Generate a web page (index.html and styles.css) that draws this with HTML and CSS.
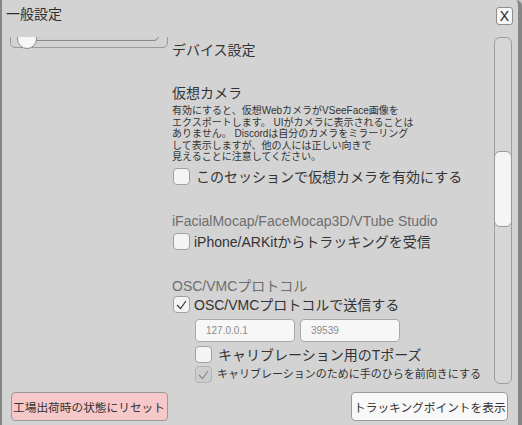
FILE: index.html
```html
<!DOCTYPE html>
<html lang="ja">
<head>
<meta charset="utf-8">
<link rel="stylesheet" href="styles.css">
</head>
<body>
<div class="window">
  <div class="titlebar">
    <span class="title">一般設定</span>
    <button class="close">X</button>
  </div>
  <div class="main">
    <div class="left-pane">
      <div class="slider-box">
        <div class="track">
          <div class="knob"></div>
        </div>
      </div>
    </div>
    <div class="content">
      <div class="h-section">デバイス設定</div>
      <div class="h-camera">仮想カメラ</div>
      <div class="desc">有効にすると、仮想WebカメラがVSeeFace画像を<br>エクスポートします。 UIがカメラに表示されることは<br>ありません。 Discordは自分のカメラをミラーリング<br>して表示しますが、他の人には正しい向きで<br>見えることに注意してください。</div>
      <div class="row row-cam"><span class="cb"></span><span class="label">このセッションで仮想カメラを有効にする</span></div>
      <div class="h-gray h-ifm">iFacialMocap/FaceMocap3D/VTube Studio</div>
      <div class="row row-iphone"><span class="cb"></span><span class="label">iPhone/ARKitからトラッキングを受信</span></div>
      <div class="h-gray h-osc">OSC/VMCプロトコル</div>
      <div class="row row-osc"><span class="cb"><svg viewBox="0 0 17 17" width="17" height="17"><path d="M4 9 L7.5 12.5 L13 5" fill="none" stroke="#3a3a3a" stroke-width="1.2"/></svg></span><span class="label">OSC/VMCプロトコルで送信する</span></div>
      <div class="inputs">
        <div class="field">127.0.0.1</div>
        <div class="field">39539</div>
      </div>
      <div class="row row-tpose"><span class="cb"></span><span class="label">キャリブレーション用のTポーズ</span></div>
      <div class="row row-palm"><span class="cb cb-disabled"><svg viewBox="0 0 17 17" width="17" height="17"><path d="M4 9 L7.5 12.5 L13 5" fill="none" stroke="#8a8a8a" stroke-width="1.2"/></svg></span><span class="label-small">キャリブレーションのために手のひらを前向きにする</span></div>
    </div>
    <div class="scrollbar"><div class="thumb"></div></div>
  </div>
  <div class="footer">
    <button class="btn btn-reset">工場出荷時の状態にリセット</button>
    <button class="btn btn-show">トラッキングポイントを表示</button>
  </div>
</div>
</body>
</html>
```

FILE: styles.css
```css
html, body {
  margin: 0;
  padding: 0;
  background: #c9c9c9;
}
body {
  font-family: "Liberation Sans", "Noto Sans CJK JP", sans-serif;
  color: #333333;
}
.window {
  box-sizing: border-box;
  width: 522px;
  height: 425px;
  background: #d3d3d3;
  border-left: 2px solid #858585;
  border-right: 4px solid #858585;
  border-top-right-radius: 6px;
  overflow: hidden;
  display: flex;
  flex-direction: column;
}
.titlebar {
  height: 30px;
  display: flex;
  align-items: center;
  justify-content: space-between;
  padding-left: 4px;
  padding-right: 5px;
  flex: none;
}
.title {
  font-size: 14px;
  line-height: 18px;
  color: #2e2e2e;
  margin-top: -2px;
}
.close {
  width: 17px;
  height: 18px;
  margin-top: 2px;
  padding: 0;
  background: #f6f6f6;
  border: 1px solid #8c8c8c;
  border-radius: 3px;
  font-family: "Liberation Sans", sans-serif;
  font-size: 14px;
  line-height: 16px;
  color: #222;
}
.main {
  display: flex;
  margin-top: 7px;
  height: 347px;
  flex: none;
}
.left-pane {
  width: 158px;
  margin-left: 8px;
  height: 100%;
  overflow: hidden;
  flex: none;
}
.slider-box {
  box-sizing: border-box;
  height: 40px;
  margin-top: -29px;
  border: 1px solid #9a9a9a;
  border-radius: 5px;
  padding-top: 22px;
  padding-left: 10px;
  padding-right: 8px;
}
.track {
  position: relative;
  height: 8px;
  border: 1px solid #8a8a8a;
  border-radius: 5px;
  background: #d0d0d0;
}
.knob {
  box-sizing: border-box;
  position: absolute;
  left: -5px;
  top: -3px;
  width: 20px;
  height: 20px;
  border-radius: 50%;
  background: #f7f7f7;
  border: 1px solid #8a8a8a;
}
.content {
  width: 322px;
  margin-left: 4px;
  height: 100%;
  overflow: hidden;
  flex: none;
  display: flex;
  flex-direction: column;
  align-items: flex-start;
}
.h-section {
  font-size: 14px;
  line-height: 18px;
  margin-top: 4px;
}
.h-camera {
  font-size: 14px;
  line-height: 18px;
  margin-top: 25px;
}
.desc {
  font-size: 10px;
  line-height: 11.5px;
  margin-top: 3px;
}
.row {
  display: flex;
  align-items: center;
  height: 18px;
  padding-left: 1px;
}
.cb {
  box-sizing: border-box;
  width: 17px;
  height: 17px;
  background: #f4f4f4;
  border: 1px solid #a0a0a0;
  border-radius: 4px;
  flex: none;
  display: flex;
}
.cb svg {
  margin: -1px;
}
.cb-disabled {
  background: #cdcdcd;
  border-color: #b2b2b2;
}
.label {
  font-size: 14px;
  line-height: 18px;
  margin-left: 6px;
  white-space: nowrap;
}
.label-small {
  font-size: 11px;
  line-height: 14px;
  margin-left: 5px;
  white-space: nowrap;
  margin-top: -2px;
}
.row-cam {
  margin-top: 5px;
}
.h-gray {
  font-size: 14px;
  line-height: 16px;
  color: #6e6e6e;
}
.h-ifm {
  margin-top: 27px;
}
.row-iphone {
  margin-top: 4px;
}
.row-iphone .label {
  margin-left: 4px;
}
.h-osc {
  margin-top: 27px;
}
.row-osc {
  margin-top: 2px;
}
.row-osc .label {
  margin-left: 4px;
}
.inputs {
  display: flex;
  gap: 5px;
  margin-top: 5px;
  margin-left: 23px;
}
.field {
  box-sizing: border-box;
  width: 100px;
  height: 23px;
  background: #f7f7f7;
  border: 1px solid #a8a8a8;
  border-radius: 4px;
  font-size: 10px;
  line-height: 21px;
  color: #8a8a8a;
  padding-left: 10px;
}
.row-tpose {
  margin-top: 4px;
  margin-left: 22px;
}
.row-palm {
  margin-top: 2px;
  margin-left: 22px;
}
.scrollbar {
  box-sizing: border-box;
  width: 18px;
  height: 347px;
  border: 1px solid #9e9e9e;
  border-radius: 6px;
  background: #d6d6d6;
  flex: none;
  display: flex;
  flex-direction: column;
}
.thumb {
  box-sizing: border-box;
  margin-top: 113px;
  margin-left: -1px;
  margin-right: -1px;
  height: 76px;
  background: #f5f5f5;
  border: 1px solid #9a9a9a;
  border-radius: 6px;
}
.footer {
  display: flex;
  justify-content: space-between;
  margin-top: 8px;
  padding-left: 9px;
  padding-right: 10px;
}
.btn {
  box-sizing: border-box;
  width: 157px;
  height: 29px;
  padding: 0 0 0 1px;
  border: 1px solid #9a9a9a;
  border-radius: 4px;
  font-family: "Liberation Sans", "Noto Sans CJK JP", sans-serif;
  font-size: 11.7px;
  color: #333;
  white-space: nowrap;
  overflow: hidden;
  text-align: left;
}
.btn-reset {
  background: #f6c8ca;
}
.btn-show {
  background: #f8f8f8;
  padding-left: 2px;
}
```
